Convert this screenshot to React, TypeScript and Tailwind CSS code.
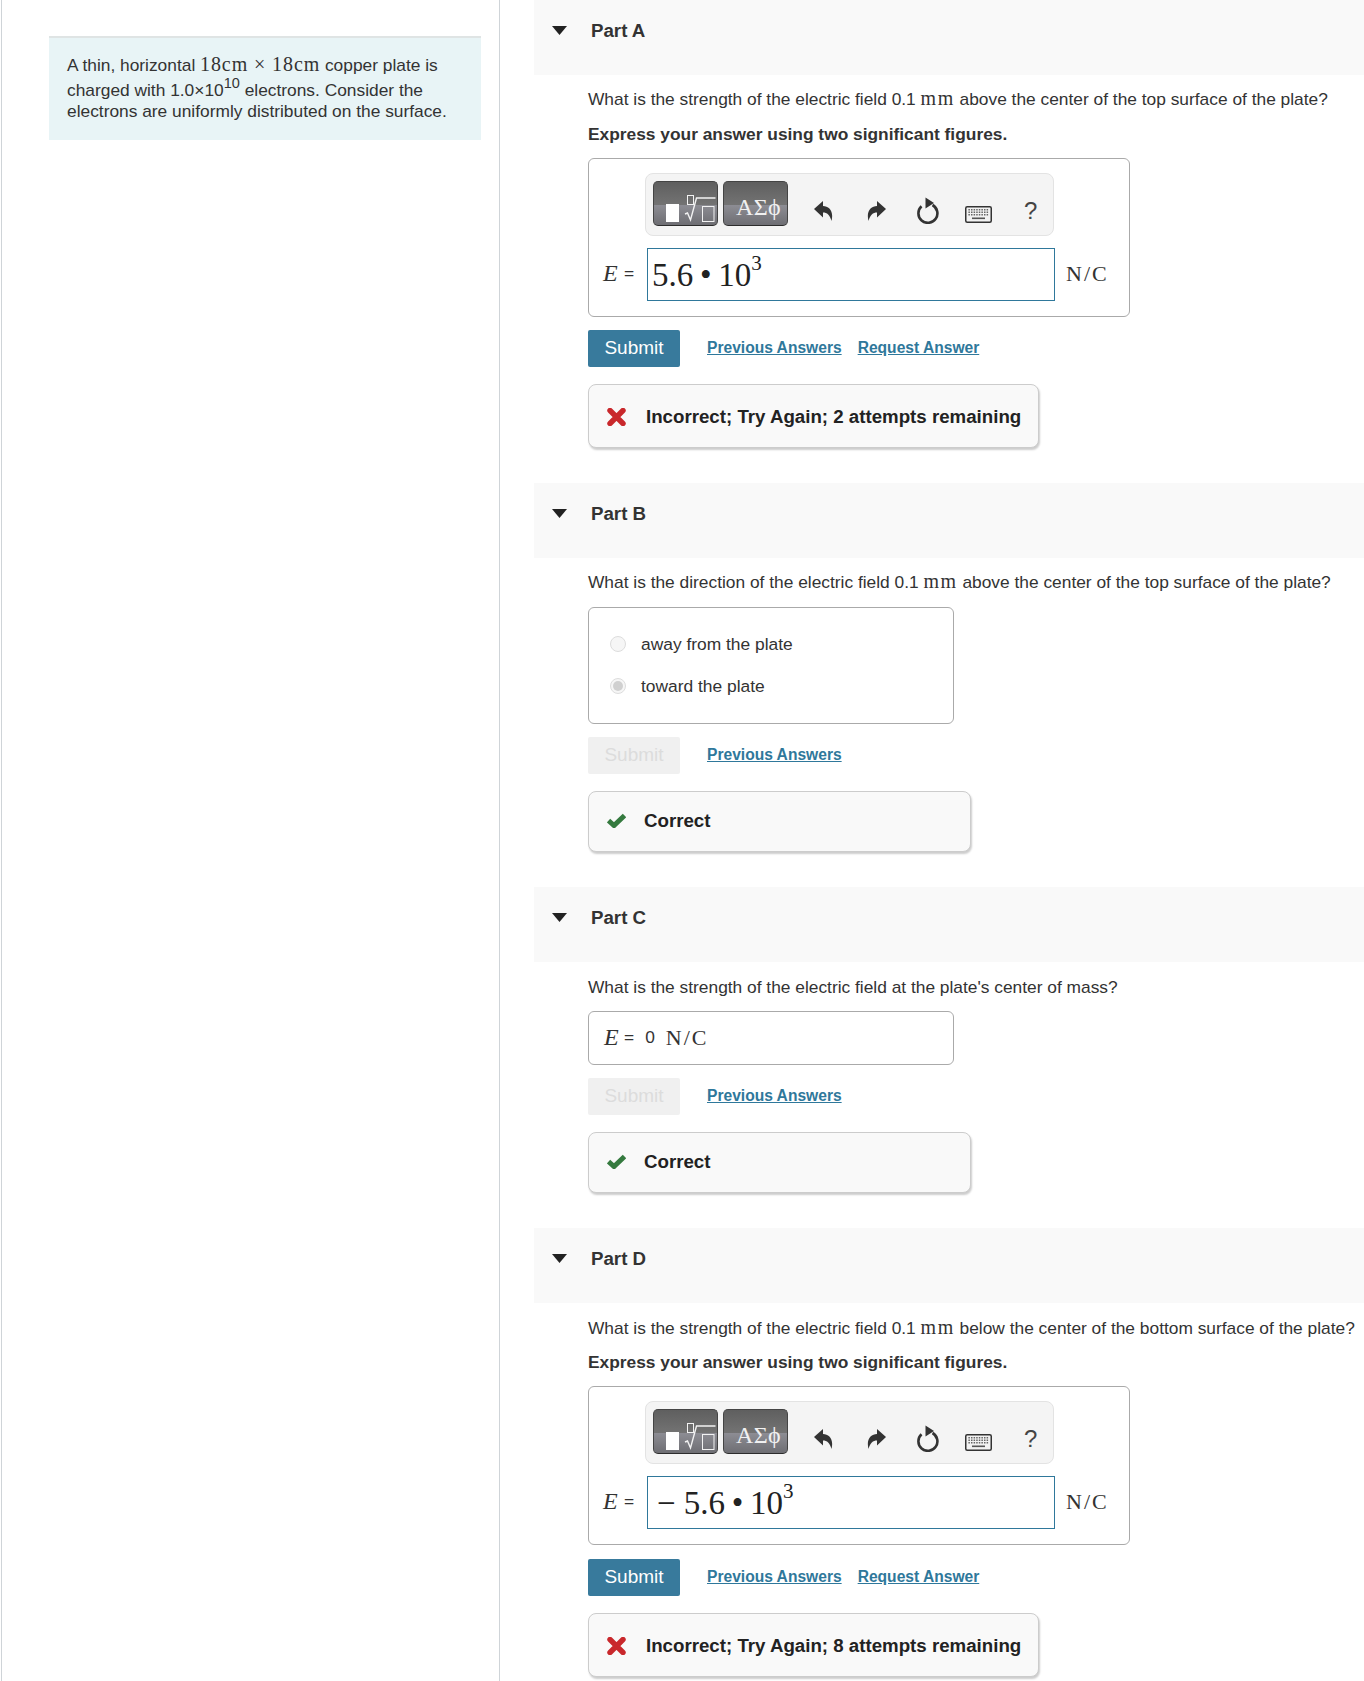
import React from "react";

const serif = "font-['Liberation_Serif',serif]";

function PartHeader({ label }: { label: string }) {
  return (
    <div className="h-[75px] bg-[#f9f9f9] flex items-start pl-[18px] pt-[21px]">
      <svg width="15" height="9" viewBox="0 0 15 9" className="mt-[5px]">
        <path d="M0 0h15L7.5 9z" fill="#222" />
      </svg>
      <span className="ml-[24px] text-[18.7px] leading-[20px] font-bold text-[#333]">{label}</span>
    </div>
  );
}

function Mm() {
  return <span className={`${serif} text-[20px] tracking-[1.5px]`}>mm</span>;
}

function Links({ request }: { request?: boolean }) {
  return (
    <div className="flex items-center gap-[16px] ml-[27px] pb-[2px] text-[15.6px] font-bold text-[#2f789b] underline">
      <span>Previous Answers</span>
      {request && <span>Request Answer</span>}
    </div>
  );
}

function SubmitRow({ disabled, request, className }: { disabled?: boolean; request?: boolean; className?: string }) {
  return (
    <div className={`flex items-center ${className}`}>
      <div
        className={`w-[92px] h-[37px] rounded-[2px] flex items-center justify-center text-[19px] ${
          disabled ? "bg-[#f0f0f0] text-[#dcdcdc]" : "bg-[#387a9c] text-white"
        }`}
      >
        Submit
      </div>
      <Links request={request} />
    </div>
  );
}

function CrossIcon() {
  return (
    <svg width="19" height="18" viewBox="0 0 19 18" className="shrink-0 mt-[1px]">
      <path d="M3 2.5L16 15.5M16 2.5L3 15.5" stroke="#c9282c" strokeWidth="5.4" strokeLinecap="round" />
    </svg>
  );
}

function CheckIcon() {
  return (
    <svg width="19" height="15" viewBox="0 0 19 15" className="shrink-0 -mt-[3px]">
      <path d="M1.5 7.5L7 12.5L17.5 2.5" stroke="#357a3f" strokeWidth="5" fill="none" />
    </svg>
  );
}

function Feedback({ ok, text, className }: { ok?: boolean; text: string; className?: string }) {
  return (
    <div
      className={`border border-[#ccc] rounded-[8px] bg-[#f9f9f9] shadow-[1px_2px_2px_rgba(0,0,0,0.2)] flex items-center pl-[18px] ${
        ok ? "w-[383px] h-[61px]" : "w-[451px] h-[64px]"
      } ${className}`}
    >
      {ok ? <CheckIcon /> : <CrossIcon />}
      <span className={`${ok ? "ml-[18px]" : "ml-[20px] mt-[3px]"} text-[18.7px] font-bold text-[#222] whitespace-nowrap`}>{text}</span>
    </div>
  );
}

function RootIcon() {
  return (
    <svg width="65" height="45" viewBox="0 0 65 45" fill="none" className="absolute -left-px -top-px">
      <rect x="13" y="23" width="13" height="18" fill="#fff" />
      <rect x="34.5" y="14.5" width="6" height="9" stroke="#f2f2f2" />
      <path d="M32 33l2.5 -1l3 7l6 -22h19" stroke="#f2f2f2" strokeWidth="1.4" />
      <rect x="49.5" y="25.5" width="11.5" height="15" stroke="#f2f2f2" />
    </svg>
  );
}

function UndoIcon({ flip }: { flip?: boolean }) {
  return (
    <svg width="19" height="20" viewBox="0 0 19 20" className={flip ? "-scale-x-100" : ""}>
      <path d="M0 8L9 0V5C15 5 20 10 17.5 20C16 14 13 11.5 9 11.5V16.5Z" fill="#333" />
    </svg>
  );
}

function KeyboardIcon() {
  const keys: React.ReactNode[] = [];
  for (let r = 0; r < 3; r++) {
    for (let c = 0; c < 8; c++) {
      keys.push(<rect key={`${r}-${c}`} x={3.4 + c * 2.6} y={3 + r * 2.5} width="1.5" height="1.5" fill="#666" />);
    }
  }
  return (
    <svg width="27" height="17" viewBox="0 0 27 17">
      <rect x="0.75" y="0.75" width="25.5" height="15.5" rx="1.5" fill="#f2f2f2" stroke="#333" strokeWidth="1.5" />
      {keys}
      <rect x="7" y="11.5" width="13" height="1.6" fill="#555" />
    </svg>
  );
}

function ReloadIcon() {
  return (
    <svg width="24" height="27" viewBox="0 0 24 27" fill="none">
      <path d="M16.5 8A9.5 9.5 0 1 1 5.5 9.3" stroke="#333" strokeWidth="2.6" />
      <path d="M9.5 0.5V11.5L18 6Z" fill="#333" />
    </svg>
  );
}

function MathBlock({ prefix }: { prefix?: boolean }) {
  return (
    <div className="w-[542px] h-[159px] border border-[#aaa] rounded-[6px] pt-[14px] pl-[14px]">
      <div className="ml-[42px] w-[409px] h-[63px] bg-[#f4f4f4] border border-[#e3e3e3] rounded-[8px] flex items-start pl-[7px] pt-[7px]">
        <div className="relative w-[65px] h-[45px] rounded-[5px] border border-[#444] border-b-[#2c2c2c] bg-[linear-gradient(#5f5f5f_0%,#737373_53%,#8d8d94_53%,#6e6e73_100%)]">
          <RootIcon />
        </div>
        <div className={`ml-[5px] w-[65px] h-[45px] rounded-[5px] border border-[#444] border-b-[#2c2c2c] bg-[linear-gradient(#5f5f5f_0%,#737373_53%,#8d8d94_53%,#6e6e73_100%)] flex items-center justify-center text-[24px] text-[#f0f0f0] pt-[7px] pl-[6px] tracking-[0.4px] ${serif}`}>
          ΑΣϕ
        </div>
        <div className="flex items-start text-[#333]">
          <span className="ml-[26px] mt-[20px]"><UndoIcon /></span>
          <span className="ml-[34px] mt-[20px]"><UndoIcon flip /></span>
          <span className="ml-[30px] mt-[16px]"><ReloadIcon /></span>
          <span className="ml-[25px] mt-[25px]"><KeyboardIcon /></span>
          <span className="ml-[32px] mt-[18px] text-[24px] text-[#444] leading-none">?</span>
        </div>
      </div>
      <div className="flex items-center mt-[12px]">
        <div className="w-[44px] shrink-0 flex items-center pb-[3px]">
          <span className={`${serif} italic text-[24px] w-[21px] text-[#333]`}>E</span>
          <span className="text-[17.4px] text-[#333]">=</span>
        </div>
        <div className={`w-[408px] h-[53px] border border-[#2f789b] flex items-center pt-[2px] text-[33px] text-[#222] whitespace-pre [word-spacing:-1.5px] ${serif} ${prefix ? "pl-[9px]" : "pl-[4px]"}`}>
          {prefix && <span className="mr-[8px]">−</span>}
          5.6 • 10<sup className="text-[21px] -top-[13px]">3</sup>
        </div>
        <span className={`ml-[11px] pb-[2px] text-[22px] tracking-[2px] text-[#333] ${serif}`}>N/C</span>
      </div>
    </div>
  );
}

function Radio({ checked, label, className }: { checked?: boolean; label: string; className?: string }) {
  return (
    <div className={`flex items-center h-[24px] ${className}`}>
      <span className="w-[16px] h-[16px] -mt-[1px] rounded-full border border-[#ddd] bg-[#f6f6f6] flex items-center justify-center">
        {checked && <span className="w-[10px] h-[10px] rounded-full bg-[#d0d0d0]" />}
      </span>
      <span className="ml-[15px] text-[17.4px] text-[#333]">{label}</span>
    </div>
  );
}

export default function App() {
  return (
    <div className="flex w-[1364px] h-[1681px] overflow-hidden bg-white font-['Liberation_Sans',sans-serif] text-[#333]">
      <div className="w-[499px] ml-[1px] shrink-0 border-l border-r border-[#cfd4d8] pt-[36px] pl-[47px]">
        <div className="w-[432px] h-[104px] bg-[#e8f4f6] border-t-2 border-[#dfe4e4] pl-[18px] pt-[14px] text-[17.35px] text-[#333]">
          <div className="leading-[24px]">
            A thin, horizontal <span className={`${serif} text-[20px] tracking-[0.9px]`}>18cm × 18cm</span> copper plate is
          </div>
          <div className="leading-[27px]">
            charged with 1.0×10<sup className="text-[14.5px] -top-[8px]">10</sup> electrons. Consider the
          </div>
          <div className="leading-[14px]">electrons are uniformly distributed on the surface.</div>
        </div>
      </div>

      <div className="flex-1 pl-[34px] text-[17.35px]">
        <PartHeader label="Part A" />
        <div className="pl-[54px]">
          <p className="mt-[11px] leading-[24px] whitespace-nowrap">
            What is the strength of the electric field 0.1 <Mm /> above the center of the top surface of the plate?
          </p>
          <p className="mt-[11px] leading-[24px] font-bold">Express your answer using two significant figures.</p>
          <div className="mt-[12px]"><MathBlock /></div>
          <SubmitRow request className="mt-[13px]" />
          <Feedback text="Incorrect; Try Again; 2 attempts remaining" className="mt-[17px]" />
        </div>

        <div className="mt-[35px]"><PartHeader label="Part B" /></div>
        <div className="pl-[54px]">
          <p className="mt-[11px] leading-[24px] whitespace-nowrap">
            What is the direction of the electric field 0.1 <Mm /> above the center of the top surface of the plate?
          </p>
          <div className="mt-[13px] w-[366px] h-[117px] border border-[#aaa] rounded-[6px] pl-[21px] pt-[24px]">
            <Radio label="away from the plate" />
            <Radio checked label="toward the plate" className="mt-[18px]" />
          </div>
          <SubmitRow disabled className="mt-[13px]" />
          <Feedback ok text="Correct" className="mt-[17px]" />
        </div>

        <div className="mt-[35px]"><PartHeader label="Part C" /></div>
        <div className="pl-[54px]">
          <p className="mt-[13px] leading-[24px]">What is the strength of the electric field at the plate's center of mass?</p>
          <div className="mt-[12px] w-[366px] h-[54px] border border-[#aaa] rounded-[6px] pl-[15px] pb-[2px] flex items-center">
            <span className={`${serif} italic text-[24px] w-[20px]`}>E</span>
            <span>=</span>
            <span className="ml-[11px]">0</span>
            <span className={`${serif} ml-[11px] text-[22px] tracking-[2px]`}>N/C</span>
          </div>
          <SubmitRow disabled className="mt-[13px]" />
          <Feedback ok text="Correct" className="mt-[17px]" />
        </div>

        <div className="mt-[35px]"><PartHeader label="Part D" /></div>
        <div className="pl-[54px]">
          <p className="mt-[12px] leading-[24px] whitespace-nowrap">
            What is the strength of the electric field 0.1 <Mm /> below the center of the bottom surface of the plate?
          </p>
          <p className="mt-[10px] leading-[24px] font-bold">Express your answer using two significant figures.</p>
          <div className="mt-[12px]"><MathBlock prefix /></div>
          <SubmitRow request className="mt-[14px]" />
          <Feedback text="Incorrect; Try Again; 8 attempts remaining" className="mt-[17px]" />
        </div>
      </div>
    </div>
  );
}
